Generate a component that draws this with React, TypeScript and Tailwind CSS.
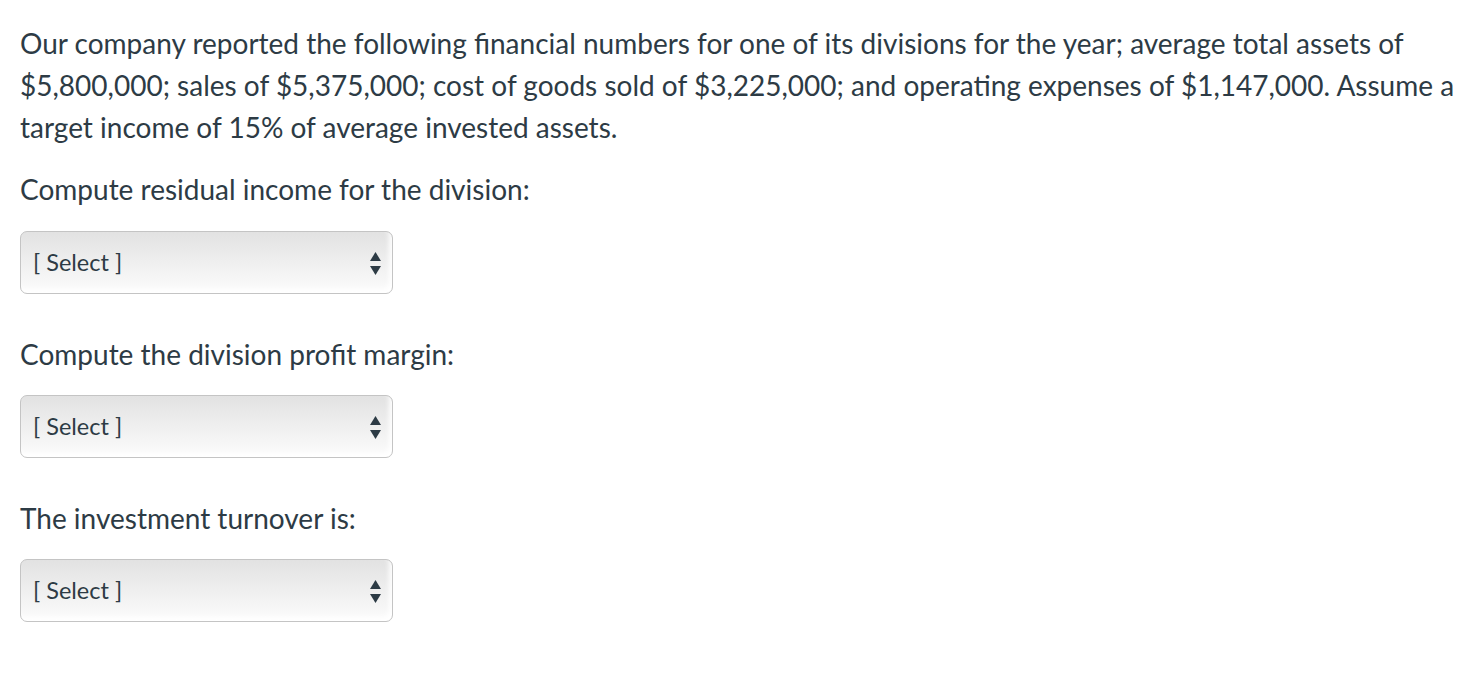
import React from 'react';

const SelectBox = () => (
  <div className="w-[373px] h-[63px] rounded-[7px] border border-[#c4c4c4] bg-gradient-to-b from-[#e2e2e2] via-[#efefef] to-[#fcfcfc] shadow-[inset_-3px_-4px_5px_rgba(255,255,255,0.95)] flex items-center justify-between pl-[12px] pr-[11px]">
    <span className="text-[23.5px] text-[#2d3b45]">[ Select ]</span>
    <svg width="11" height="23" viewBox="0 0 11 23" className="mt-[1px]">
      <polygon points="5.5,0 11,9 0,9" fill="#2d3b45" />
      <polygon points="0,14 11,14 5.5,23" fill="#2d3b45" />
    </svg>
  </div>
);

export default function App() {
  return (
    <div className="min-h-screen bg-white px-[20px] pt-[22px] font-['Lato',sans-serif] text-[#2d3b45]">
      <p className="text-[28px] leading-[42px] max-w-[1450px]">
        Our company reported the following financial numbers for one of its divisions for the year; average total assets of $5,800,000; sales of $5,375,000; cost of goods sold of $3,225,000; and operating expenses of $1,147,000. Assume a target income of 15% of average invested assets.
      </p>
      <p className="text-[28px] leading-[42px] mt-[20px]">Compute residual income for the division:</p>
      <div className="mt-[21px]"><SelectBox /></div>
      <p className="text-[28px] leading-[42px] mt-[39px]">Compute the division profit margin:</p>
      <div className="mt-[20px]"><SelectBox /></div>
      <p className="text-[28px] leading-[42px] mt-[39px]">The investment turnover is:</p>
      <div className="mt-[20px]"><SelectBox /></div>
    </div>
  );
}
